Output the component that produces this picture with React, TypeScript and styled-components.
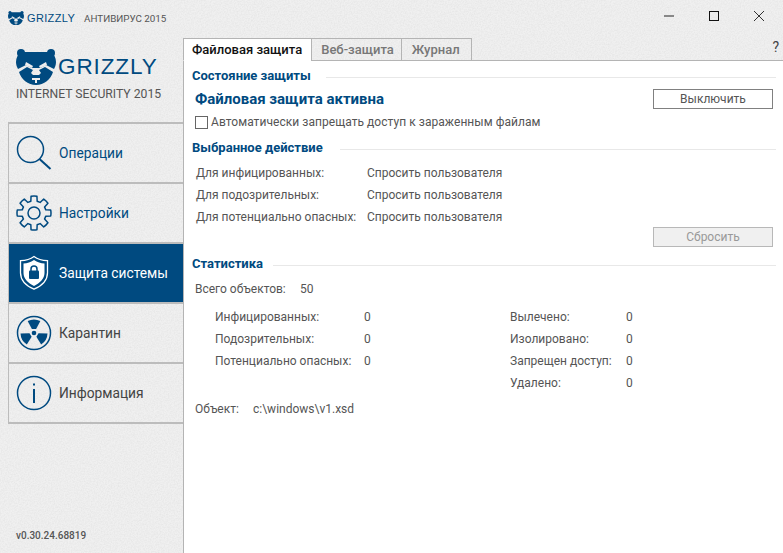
import React from 'react';
import styled, { createGlobalStyle } from 'styled-components';

const BLUE = '#004a80';
const TEXT = '#555';

const noise = `url("data:image/svg+xml,%3Csvg xmlns='http://www.w3.org/2000/svg' width='400' height='400'%3E%3Cfilter id='n'%3E%3CfeTurbulence type='fractalNoise' baseFrequency='0.7' numOctaves='3' stitchTiles='stitch'/%3E%3CfeColorMatrix values='0 0 0 0 0.6 0 0 0 0 0.6 0 0 0 0 0.6 0.5 0 0 0 -0.16'/%3E%3C/filter%3E%3Crect width='400' height='400' filter='url(%23n)'/%3E%3C/svg%3E")`;

const GlobalStyle = createGlobalStyle`
  html, body {
    margin: 0;
    padding: 0;
    height: 100%;
  }

  body {
    font-family: Roboto, "Liberation Sans", sans-serif;
    overflow: hidden;
  }

  #root {
    height: 100%;
  }
`;

const Shell = styled.div`
  display: grid;
  grid-template-columns: 183px 1fr;
  width: 783px;
  height: 553px;
  background-color: #f0f0f0;
  background-image: ${noise};
`;

const Sidebar = styled.aside`
  display: flex;
  flex-direction: column;
  min-height: 0;
`;

const TitleBrand = styled.div`
  display: flex;
  align-items: center;
  height: 20px;
  padding: 8px 0 0 8px;
  color: ${BLUE};
`;

const TitleLogoText = styled.span`
  margin-left: 3px;
  font-family: 'Liberation Sans', sans-serif;
  font-size: 11px;
  letter-spacing: 0.35px;
`;

const TitleProduct = styled.span`
  margin-left: 9px;
  color: #555;
  font-size: 9.8px;
`;

const BigLogo = styled.div`
  display: flex;
  align-items: flex-end;
  height: 36px;
  margin: 21px 0 0 16px;
`;

const BigLogoText = styled.span`
  margin: 0 0 5px 2px;
  color: ${BLUE};
  font-family: 'Liberation Sans', sans-serif;
  font-size: 22.5px;
  line-height: 26px;
  letter-spacing: 0.9px;
`;

const Edition = styled.div`
  margin: 2px 0 0 16px;
  color: #555;
  font-size: 12.2px;
  line-height: 15px;
`;

const Nav = styled.nav`
  display: flex;
  flex-direction: column;
  margin: 20px 0 0 8px;
  border: 2px solid #bcbcbc;
  border-left-width: 1px;
  border-right: 0;
`;

const NavItem = styled.div<{ $active?: boolean; $tone?: 'blue' | 'dark' }>`
  display: flex;
  align-items: center;
  gap: 7px;
  box-sizing: border-box;
  height: 60px;
  padding: 0 0 0 7px;
  color: ${(p) => (p.$active ? '#fff' : p.$tone === 'dark' ? '#444' : BLUE)};
  background: ${(p) => (p.$active ? BLUE : 'transparent')};
  font-size: 13.75px;
  border-bottom: 2px solid #bcbcbc;

  &:last-child {
    height: 58px;
    border-bottom: 0;
  }
`;

const Version = styled.div`
  margin: auto 0 11px 16px;
  color: #555;
  font-size: 10px;
  font-weight: 500;
  line-height: 12px;
`;

const Main = styled.main`
  display: flex;
  flex-direction: column;
  min-width: 0;
`;

const WindowBar = styled.div`
  display: flex;
  justify-content: flex-end;
  height: 38px;
  padding-right: 2px;
`;

const WindowButton = styled.div`
  display: flex;
  justify-content: center;
  width: 45px;
  padding-top: 11px;
  box-sizing: border-box;
`;

const TabRow = styled.div`
  position: relative;
  z-index: 1;
  display: flex;
  height: 23px;
  margin-bottom: -1px;
`;

const Tab = styled.div<{ $active?: boolean; $pad: string }>`
  display: flex;
  align-items: center;
  box-sizing: border-box;
  padding: ${(p) => p.$pad};
  margin-left: ${(p) => (p.$active ? '0' : '-1px')};
  color: ${(p) => (p.$active ? '#111' : '#777')};
  background: ${(p) => (p.$active ? '#fff' : 'transparent')};
  border: 1px solid #b4b4b4;
  border-bottom: ${(p) => (p.$active ? '1px solid #fff' : '1px solid #b4b4b4')};
  font-size: 13px;
  font-weight: 500;
`;

const Help = styled.span`
  position: absolute;
  top: 1px;
  right: 4px;
  color: #444;
  font-size: 14px;
`;

const Panel = styled.section`
  flex: 1;
  box-sizing: border-box;
  padding: 7px 7px 0 8px;
  background: #fff;
  border-top: 1px solid #b4b4b4;
  border-left: 1px solid #b4b4b4;
`;

const SectionTitle = styled.div<{ $lineGap: number; $top: number }>`
  display: flex;
  align-items: center;
  gap: ${(p) => p.$lineGap}px;
  margin-top: ${(p) => p.$top}px;
  color: ${BLUE};
  font-size: 13px;
  font-weight: 700;
  line-height: 16px;

  &::after {
    content: '';
    flex: 1;
    height: 1px;
    margin-top: 3px;
    background: #e8e8e8;
  }
`;

const StatusRow = styled.div`
  display: flex;
  justify-content: space-between;
  align-items: center;
  margin: 5px 3px 0 3px;
`;

const StatusText = styled.div`
  color: ${BLUE};
  font-size: 15px;
  font-weight: 700;
`;

const Button = styled.div<{ $disabled?: boolean }>`
  display: flex;
  align-items: center;
  justify-content: center;
  box-sizing: border-box;
  width: 120px;
  height: 20px;
  color: ${(p) => (p.$disabled ? '#999' : '#555')};
  background: ${(p) => (p.$disabled ? '#f0f0f0' : '#fff')};
  border: 1px solid ${(p) => (p.$disabled ? '#b8b8b8' : '#808080')};
  font-size: 12px;
`;

const CheckRow = styled.div`
  display: flex;
  align-items: center;
  gap: 3px;
  margin: 6px 0 0 3px;
  color: ${TEXT};
  font-size: 12px;
  letter-spacing: 0.05px;
  line-height: 15px;
`;

const CheckBox = styled.span`
  box-sizing: border-box;
  width: 13px;
  height: 13px;
  background: #fff;
  border: 1px solid #666;
`;

const Pairs = styled.div<{ $label: number; $left: number; $top?: number }>`
  display: grid;
  grid-template-columns: ${(p) => p.$label}px auto;
  grid-auto-rows: 22px;
  align-items: center;
  justify-content: start;
  margin: ${(p) => p.$top ?? 0}px 0 0 ${(p) => p.$left}px;
  color: ${TEXT};
  font-size: 12px;
`;

const ResetRow = styled.div`
  display: flex;
  justify-content: flex-end;
  margin: -1px 3px 0 0;
`;

const StatColumns = styled.div`
  display: flex;
  margin-top: 6px;
`;

const StatColumn = styled.div<{ $width: number }>`
  width: ${(p) => p.$width}px;
`;

const StatRowHeight = styled.div`
  height: 88px;
`;

const BearLogo = ({ size }: { size: number }) => (
  <svg width={size} height={size * 0.9} viewBox="0 0 40 36" fill={BLUE}>
    <circle cx="5" cy="4" r="4" />
    <circle cx="35" cy="4" r="4" />
    <path d="M5 3h30c3 2 5 6 5 10 0 3-1 5-2 7l-8-4-6 3h-8l-6-3-8 4c-1-2-2-4-2-7 0-4 2-8 5-10z" />
    <path d="M3 23l8-5 6 3-2 3 2 2h6l2-2-2-3 6-3 8 5c-2 7-9 13-17 13S5 30 3 23z" />
    <path d="M10 13l7 4-1 2-7-3zM30 13l-7 4 1 2 7-3z" fill="#eee" />
    <path d="M16 29h8v2h-8z" fill="#eee" />
    <path d="M19 29h2v5h-2z" fill="#eee" />
  </svg>
);

const pt = (r: number, deg: number) => {
  const a = ((deg - 90) * Math.PI) / 180;
  return `${(18 + r * Math.cos(a)).toFixed(2)} ${(18 + r * Math.sin(a)).toFixed(2)}`;
};

const teethPath = () => {
  let d = '';
  for (let i = 0; i < 8; i++) {
    const c = i * 45;
    d += `${i === 0 ? 'M' : 'L'}${pt(12.2, c - 15)}L${pt(17, c - 10)}A17 17 0 0 1 ${pt(17, c + 10)}L${pt(12.2, c + 15)}`;
  }
  return d + 'Z';
};

const blade = (c: number) =>
  `M${pt(4.5, c - 28)}L${pt(13.5, c - 28)}A13.5 13.5 0 0 1 ${pt(13.5, c + 28)}L${pt(4.5, c + 28)}Z`;

const SearchIcon = () => (
  <svg width="36" height="36" viewBox="0 0 36 36" fill="none" stroke={BLUE}>
    <circle cx="14.5" cy="14.5" r="13" strokeWidth="1.5" />
    <path d="M23.5 24l11 10" strokeWidth="2" />
  </svg>
);

const GearIcon = () => (
  <svg width="36" height="36" viewBox="0 0 36 36" fill="none" stroke={BLUE} strokeWidth="1.5" strokeLinejoin="round">
    <path d={teethPath()} />
    <circle cx="18" cy="18" r="6" />
  </svg>
);

const ShieldIcon = () => (
  <svg width="36" height="36" viewBox="0 0 36 36" fill="none">
    <path d="M18 1.5c4 3 8.500 4 13.500 4.200v12c0 7.500-5.500 13-13.500 16.500C10 30.700 4.500 25.200 4.500 17.700v-12C9.500 5.500 14 4.500 18 1.500z" stroke="#fff" strokeWidth="1.3" />
    <path d="M18 5c3.500 2.300 6.500 3.300 10.500 3.500v9.500c0 5.500-4.500 10-10.500 13-6-3-10.500-7.500-10.500-13V8.500C11.500 8.300 14.500 7.300 18 5z" fill="#fff" />
    <rect x="13" y="15.500" width="10" height="8.500" rx="1" fill={BLUE} />
    <path d="M15 16v-2a3 3 0 0 1 6 0v2" stroke={BLUE} strokeWidth="1.5" />
  </svg>
);

const QuarantineIcon = () => (
  <svg width="36" height="36" viewBox="0 0 36 36" fill={BLUE}>
    <circle cx="18" cy="18" r="16.500" fill="none" stroke={BLUE} strokeWidth="1.5" />
    <path d={blade(0)} />
    <path d={blade(120)} />
    <path d={blade(240)} />
    <circle cx="18" cy="18" r="2.300" />
  </svg>
);

const InfoIcon = () => (
  <svg width="36" height="36" viewBox="0 0 36 36" fill={BLUE}>
    <circle cx="18" cy="18" r="16.500" fill="none" stroke={BLUE} strokeWidth="1.5" />
    <rect x="17" y="14" width="2" height="14" />
    <rect x="17" y="8.500" width="2" height="2" />
  </svg>
);

const Minimize = () => (
  <svg width="10" height="10" viewBox="0 0 10 10" fill="none" stroke="#666" strokeWidth="1.500">
    <path d="M0 5h10" />
  </svg>
);

const Maximize = () => (
  <svg width="10" height="10" viewBox="0 0 10 10" fill="none" stroke="#111">
    <rect x=".5" y=".5" width="9" height="9" />
  </svg>
);

const CloseIcon = () => (
  <svg width="10" height="10" viewBox="0 0 10 10" fill="none" stroke="#333">
    <path d="M0 0l10 10M10 0L0 10" />
  </svg>
);

const actions = [
  ['Для инфицированных:', 'Спросить пользователя'],
  ['Для подозрительных:', 'Спросить пользователя'],
  ['Для потенциально опасных:', 'Спросить пользователя'],
];

const statsLeft = [
  ['Инфицированных:', '0'],
  ['Подозрительных:', '0'],
  ['Потенциально опасных:', '0'],
];

const statsRight = [
  ['Вылечено:', '0'],
  ['Изолировано:', '0'],
  ['Запрещен доступ:', '0'],
  ['Удалено:', '0'],
];

const renderPairs = (rows: string[][]) =>
  rows.map(([label, value]) => (
    <React.Fragment key={label}>
      <span>{label}</span>
      <span>{value}</span>
    </React.Fragment>
  ));

export default function App() {
  return (
    <Shell>
      <GlobalStyle />
      <Sidebar>
        <TitleBrand>
          <BearLogo size={16} />
          <TitleLogoText>GRIZZLY</TitleLogoText>
          <TitleProduct>АНТИВИРУС 2015</TitleProduct>
        </TitleBrand>
        <BigLogo>
          <BearLogo size={40} />
          <BigLogoText>GRIZZLY</BigLogoText>
        </BigLogo>
        <Edition>INTERNET SECURITY 2015</Edition>
        <Nav>
          <NavItem>
            <SearchIcon />
            Операции
          </NavItem>
          <NavItem>
            <GearIcon />
            Настройки
          </NavItem>
          <NavItem $active>
            <ShieldIcon />
            Защита системы
          </NavItem>
          <NavItem $tone="dark">
            <QuarantineIcon />
            Карантин
          </NavItem>
          <NavItem $tone="dark">
            <InfoIcon />
            Информация
          </NavItem>
        </Nav>
        <Version>v0.30.24.68819</Version>
      </Sidebar>
      <Main>
        <WindowBar>
          <WindowButton>
            <Minimize />
          </WindowButton>
          <WindowButton>
            <Maximize />
          </WindowButton>
          <WindowButton>
            <CloseIcon />
          </WindowButton>
        </WindowBar>
        <TabRow>
          <Tab $active $pad="0 9px 0 8px">
            Файловая защита
          </Tab>
          <Tab $pad="0 7px 0 9px">Веб-защита</Tab>
          <Tab $pad="0 11px 0 10px">Журнал</Tab>
          <Help>?</Help>
        </TabRow>
        <Panel>
          <SectionTitle $lineGap={15} $top={0}>
            Состояние защиты
          </SectionTitle>
          <StatusRow>
            <StatusText>Файловая защита активна</StatusText>
            <Button>Выключить</Button>
          </StatusRow>
          <CheckRow>
            <CheckBox />
            Автоматически запрещать доступ к зараженным файлам
          </CheckRow>
          <SectionTitle $lineGap={17} $top={10}>
            Выбранное действие
          </SectionTitle>
          <Pairs $label={171} $left={4} $top={6}>
            {renderPairs(actions)}
          </Pairs>
          <ResetRow>
            <Button $disabled>Сбросить</Button>
          </ResetRow>
          <SectionTitle $lineGap={10} $top={9}>
            Статистика
          </SectionTitle>
          <Pairs $label={105} $left={3} $top={6}>
            {renderPairs([['Всего объектов:', '50']])}
          </Pairs>
          <StatColumns>
            <StatColumn $width={318}>
              <StatRowHeight>
                <Pairs $label={149} $left={23}>
                  {renderPairs(statsLeft)}
                </Pairs>
              </StatRowHeight>
            </StatColumn>
            <StatColumn $width={200}>
              <Pairs $label={116} $left={0}>
                {renderPairs(statsRight)}
              </Pairs>
            </StatColumn>
          </StatColumns>
          <Pairs $label={58} $left={3} $top={4}>
            {renderPairs([['Объект:', 'c:\\windows\\v1.xsd']])}
          </Pairs>
        </Panel>
      </Main>
    </Shell>
  );
}
